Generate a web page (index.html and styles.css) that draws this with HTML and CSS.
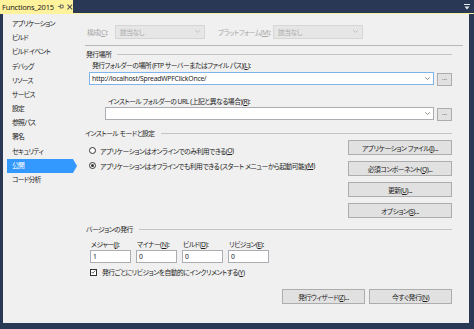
FILE: index.html
```html
<!DOCTYPE html>
<html lang="ja">
<head>
<meta charset="UTF-8" />
<title>Functions_2015 - 公開</title>
<link rel="stylesheet" href="styles.css">
</head>
<body>

<div class="tabbar">
  <div class="tab">
    <span class="tab-title">Functions_2015</span>
    <svg class="pin" width="7" height="7" viewBox="0 0 7 7"><path d="M0 3.5h2.5M2.5 1.5v4M2.5 2h3v3h-3" fill="none" stroke="#606060" stroke-width="1"/></svg>
    <svg class="close" width="6" height="6" viewBox="0 0 6 6"><path d="M0.5 0.5l5 5M5.5 0.5l-5 5" stroke="#505050" stroke-width="1.1"/></svg>
  </div>
  <svg class="tab-menu" width="6" height="6" viewBox="0 0 6 6"><path d="M0 0.5h6" stroke="#e8ecf4" stroke-width="1"/><path d="M0.5 2.5h5l-2.5 3z" fill="#e8ecf4"/></svg>
</div>
<div class="accent"></div>

<div class="window">
  <div class="panel">
    <ul class="nav">
      <li>アプリケーション</li>
      <li>ビルド</li>
      <li>ビルド イベント</li>
      <li>デバッグ</li>
      <li>リソース</li>
      <li>サービス</li>
      <li>設定</li>
      <li>参照パス</li>
      <li>署名</li>
      <li>セキュリティ</li>
      <li class="active">公開</li>
      <li>コード分析</li>
    </ul>

    <div class="page">
      <div class="config-row">
        <span class="dim-label">構成(<u>C</u>):</span>
        <div class="dim-select"><span>該当なし</span><svg width="5" height="3" viewBox="0 0 5 3"><path d="M0.3 0.3l2.2 2.2 2.2-2.2" fill="none" stroke="#b8b8b8" stroke-width="0.8"/></svg></div>
        <span class="dim-label platform">プラットフォーム(<u>M</u>):</span>
        <div class="dim-select"><span>該当なし</span><svg width="5" height="3" viewBox="0 0 5 3"><path d="M0.3 0.3l2.2 2.2 2.2-2.2" fill="none" stroke="#b8b8b8" stroke-width="0.8"/></svg></div>
      </div>
      <div class="rule"></div>

      <div class="group-head"><span>発行場所</span></div>
      <div class="field-label folder-label">発行フォルダーの場所 (FTP サーバーまたはファイル パス)(<u>L</u>):</div>
      <div class="combo-row folder-row">
        <div class="combo focused"><span class="url">http://localhost/SpreadWPFClickOnce/</span><svg width="5" height="3" viewBox="0 0 5 3"><path d="M0.3 0.3l2.2 2.2 2.2-2.2" fill="none" stroke="#707070" stroke-width="0.8"/></svg></div>
        <button class="browse">...</button>
      </div>
      <div class="field-label install-label">インストール フォルダーの URL (上記と異なる場合)(<u>R</u>):</div>
      <div class="combo-row install-row">
        <div class="combo"><span></span><svg width="5" height="3" viewBox="0 0 5 3"><path d="M0.3 0.3l2.2 2.2 2.2-2.2" fill="none" stroke="#707070" stroke-width="0.8"/></svg></div>
        <button class="browse">...</button>
      </div>

      <div class="group-head mode-head"><span>インストール モードと設定</span></div>
      <div class="mode-body">
        <div class="radios">
          <label class="radio"><span class="dot"></span>アプリケーションはオンラインでのみ利用できる(<u>O</u>)</label>
          <label class="radio checked"><span class="dot"></span>アプリケーションはオフラインでも利用できる (スタート メニューから起動可能)(<u>M</u>)</label>
        </div>
        <div class="side-buttons">
          <button class="btn">アプリケーション ファイル(<u>I</u>)...</button>
          <button class="btn">必須コンポーネント(<u>Q</u>)...</button>
          <button class="btn">更新(<u>U</u>)...</button>
          <button class="btn">オプション(<u>S</u>)...</button>
        </div>
      </div>

      <div class="group-head version-head"><span>バージョンの発行</span></div>
      <div class="version-row">
        <div class="vfield"><span>メジャー(<u>J</u>):</span><div class="textbox">1</div></div>
        <div class="vfield"><span>マイナー(<u>N</u>):</span><div class="textbox">0</div></div>
        <div class="vfield"><span>ビルド(<u>D</u>):</span><div class="textbox">0</div></div>
        <div class="vfield"><span>リビジョン(<u>E</u>):</span><div class="textbox">0</div></div>
      </div>
      <label class="check"><span class="box"><svg width="6" height="6" viewBox="0 0 6 6"><path d="M0.8 3l1.4 1.5 3-3.2" fill="none" stroke="#333" stroke-width="0.9"/></svg></span>発行ごとにリビジョンを自動的にインクリメントする(<u>Y</u>)</label>

      <div class="footer-buttons">
        <button class="btn wide">発行ウィザード(<u>Z</u>)...</button>
        <button class="btn wide">今すぐ発行(<u>N</u>)</button>
      </div>
    </div>
  </div>
</div>

</body>
</html>
```

FILE: styles.css
```css
/* VS 2015 のプロジェクト プロパティ画面 */
html, body {
  margin: 0;
  padding: 0;
  width: 474px;
  height: 329px;
  overflow: hidden;
  background: #293955;
  font-family: "Noto Sans", "Noto Sans CJK JP", sans-serif;
  font-size: 6.8px;
  letter-spacing: -0.5px;
  color: #1e1e1e;
  font-feature-settings: "palt";
}

u { text-decoration: underline; }

/* タブ */
.tabbar {
  height: 13px;
  display: flex;
  align-items: center;
  justify-content: space-between;
}
.tab {
  width: 73px;
  height: 13px;
  background: #fff29d;
  display: flex;
  align-items: center;
  box-sizing: border-box;
  padding-left: 2px;
}
.tab-title {
  font-size: 7.5px;
  letter-spacing: -0.2px;
  color: #1e1e1e;
}
.pin { margin-left: 4px; }
.close { margin-left: 3px; }
.tab-menu { margin-right: 4px; }

.accent {
  height: 1px;
  background: #fff29d;
}

.window {
  padding: 0 5px 6px 3px;
}
.panel {
  height: 309px;
  background: #f0f0f0;
  display: flex;
}

/* 左のナビ */
.nav {
  list-style: none;
  margin: 0;
  padding: 3px 0 0 0;
  width: 78px;
  flex-shrink: 0;
  letter-spacing: -0.7px;
}
.nav li {
  height: 14.18px;
  line-height: 14.18px;
  padding-left: 9px;
  white-space: nowrap;
}
.nav li.active {
  position: relative;
  margin-left: 4px;
  width: 66px;
  padding-left: 5px;
  box-sizing: border-box;
  background: #3399ff;
  color: #fff;
}
.nav li.active::after {
  content: "";
  position: absolute;
  right: -4px;
  top: 0;
  border-left: 4px solid #3399ff;
  border-top: 7.09px solid transparent;
  border-bottom: 7.09px solid transparent;
}

/* 右側 */
.page {
  width: 387px;
  padding-top: 10px;
  box-sizing: border-box;
}

.config-row {
  display: flex;
  align-items: center;
  height: 15px;
  margin-left: 6px;
}
.dim-label {
  color: #a8a8a8;
  width: 28px;
  white-space: nowrap;
  flex-shrink: 0;
}
.dim-label.platform { margin-left: 13px; width: 55px; }
.dim-select {
  width: 90px;
  height: 14px;
  flex-shrink: 0;
  box-sizing: border-box;
  background: #e6e6e6;
  border: 1px solid #d6d6d6;
  color: #a8a8a8;
  display: flex;
  align-items: center;
  justify-content: space-between;
  padding: 0 4px 0 4px;
}

.rule {
  margin: 6px 0 0 4px;
  width: 378px;
  height: 1px;
  background: #b9b9b9;
}

.group-head {
  display: flex;
  align-items: center;
  height: 10px;
  margin: 3px 0 0 5px;
  width: 366px;
}
.group-head span { white-space: nowrap; padding-right: 6px; }
.group-head::after {
  content: "";
  flex: 1;
  height: 1px;
  background: #c4c4c4;
}

.field-label {
  height: 10px;
  line-height: 10px;
  white-space: nowrap;
}
.folder-label { margin: 2px 0 0 11px; }
.install-label { margin: 11px 0 0 27px; }

.combo-row {
  display: flex;
  gap: 3px;
  margin-top: 1px;
}
.folder-row { margin-left: 8px; }
.install-row { margin-left: 24px; margin-top: 0; }
.combo {
  height: 13px;
  box-sizing: border-box;
  background: #fff;
  border: 1px solid #abadb3;
  display: flex;
  align-items: center;
  justify-content: space-between;
  padding: 0 3px 0 2px;
}
.url { letter-spacing: -0.2px; }
.folder-row .combo { width: 345px; }
.install-row .combo { width: 329px; }
.combo.focused { border-color: #7eb4ea; }

.browse {
  width: 15px;
  height: 13px;
  padding: 0 0 3px 0;
  margin-top: 1px;
  font: inherit;
  font-size: 6px;
  letter-spacing: 0;
  line-height: 1;
  background: #e1e1e1;
  border: 1px solid #adadad;
  color: #444;
}

.mode-head { margin: 7px 0 0 4px; width: 367px; }

.mode-body {
  display: flex;
  justify-content: space-between;
  width: 371px;
}
.radios {
  margin: 5px 0 0 8px;
  display: flex;
  flex-direction: column;
}
.radio, .check {
  display: flex;
  align-items: center;
  height: 15px;
  white-space: nowrap;
}
.radio .dot {
  width: 7px;
  height: 7px;
  box-sizing: border-box;
  border: 1px solid #333;
  border-radius: 50%;
  background: #fff;
  margin-right: 4px;
  display: flex;
  align-items: center;
  justify-content: center;
}
.radio.checked .dot::after {
  content: "";
  width: 3px;
  height: 3px;
  border-radius: 50%;
  background: #333;
}

.side-buttons {
  margin-top: 2px;
  display: flex;
  flex-direction: column;
  gap: 6px;
}
.btn {
  width: 104px;
  height: 15px;
  padding: 0;
  font: inherit;
  letter-spacing: inherit;
  color: #1e1e1e;
  background: #e1e1e1;
  border: 1px solid #adadad;
}

.version-head { margin: 6px 0 0 5px; width: 366px; }

.version-row {
  display: flex;
  gap: 5px;
  margin: 6px 0 0 9px;
}
.vfield {
  width: 41px;
  display: flex;
  flex-direction: column;
}
.vfield span {
  height: 10px;
  line-height: 10px;
  padding-left: 1px;
  white-space: nowrap;
}
.textbox {
  height: 13px;
  box-sizing: border-box;
  border: 1px solid #abadb3;
  background: #fff;
  padding-left: 2px;
  line-height: 11px;
}

.check {
  height: 10px;
  margin: 4px 0 0 9px;
}
.check .box {
  width: 7px;
  height: 7px;
  box-sizing: border-box;
  border: 1px solid #333;
  background: #fff;
  margin-right: 5px;
  display: flex;
  align-items: center;
  justify-content: center;
}

.footer-buttons {
  display: flex;
  justify-content: flex-end;
  gap: 4px;
  width: 371px;
  margin-top: 12px;
}
.btn.wide { width: 83px; }
```
